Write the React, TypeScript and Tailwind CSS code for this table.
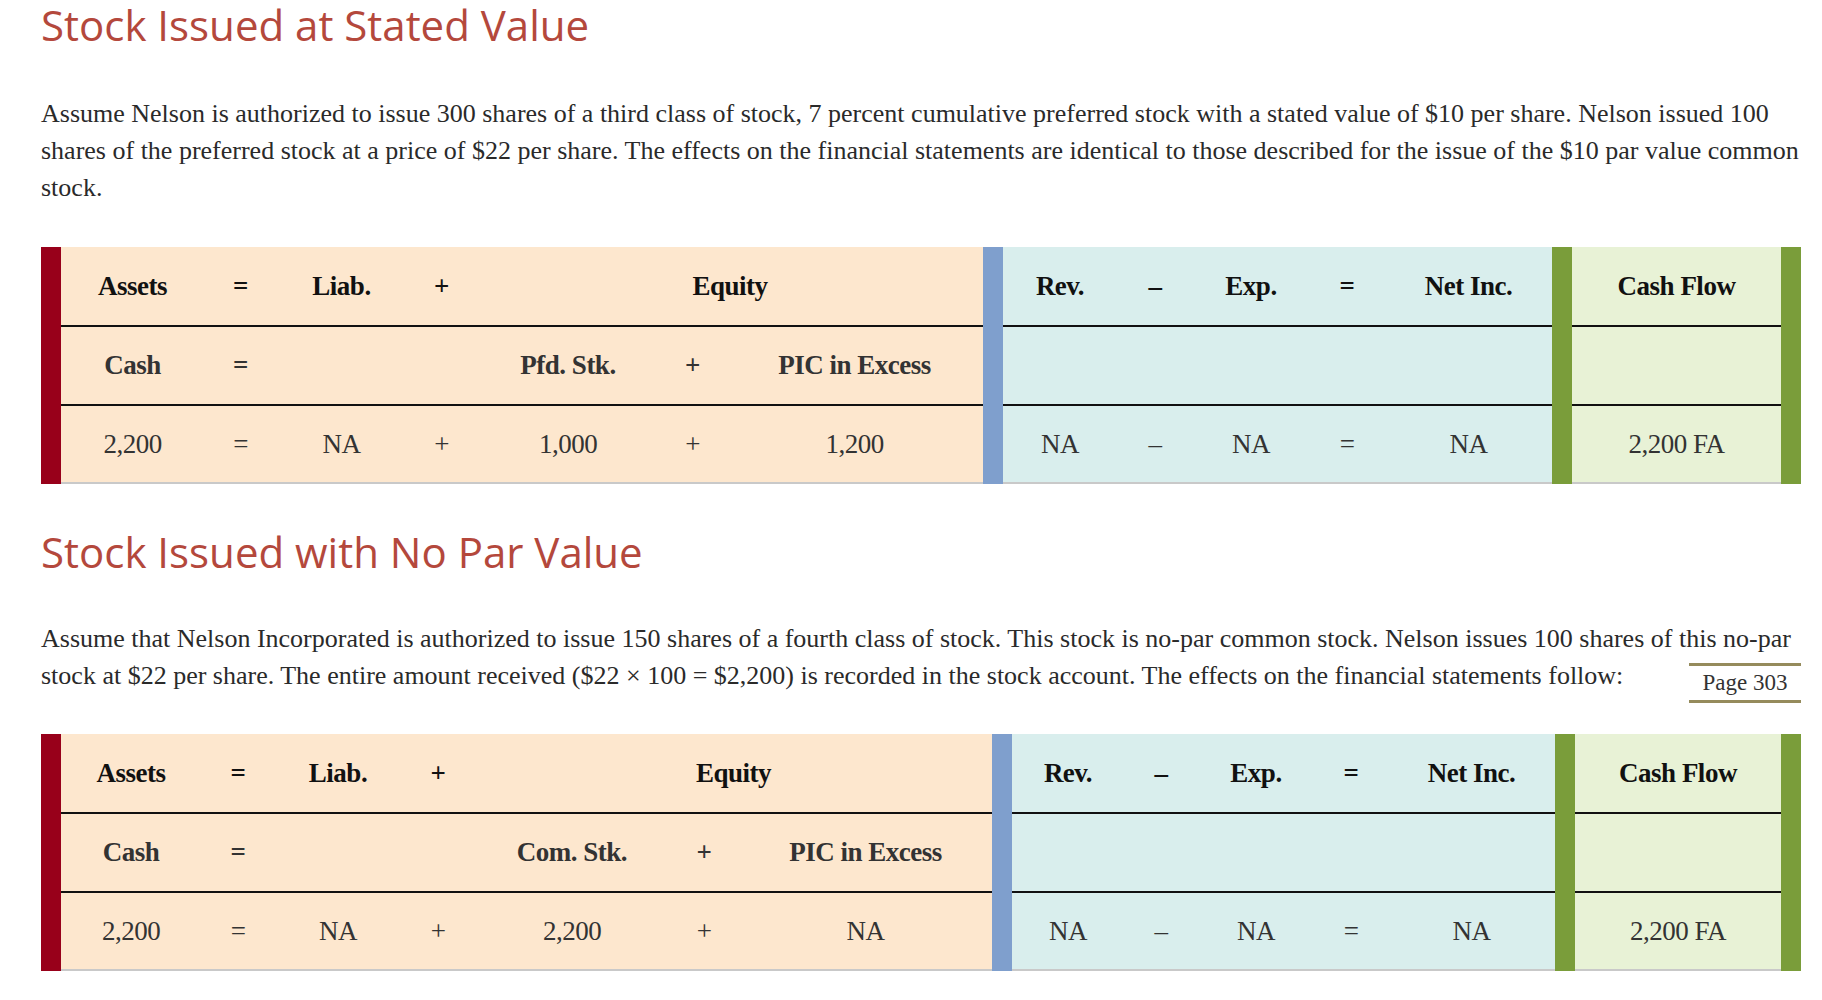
import React from 'react'

type TableProps = {
  cols: string
  stockLabel: string
  stockValue: string
  picValue: string
}

const BAR_RED = 'bg-[#98001a]'
const BAR_BLUE = 'bg-[#7f9fcd]'
const BAR_GREEN = 'bg-[#7a9d3a]'

const PEACH = 'bg-[#fde7ce]'
const ICE = 'bg-[#d9eeed]'
const LIME = 'bg-[#e8f2d6]'

function Bar({ color }: { color: string }) {
  return <div className={`row-span-3 ${color}`} />
}

function C({
  bg,
  row,
  bold,
  children,
  wide,
}: {
  bg: string
  row: 1 | 2 | 3
  bold?: boolean
  children?: React.ReactNode
  wide?: boolean
}) {
  const border =
    row === 3 ? 'border-b-2 border-b-[#c9c9c9]' : 'border-b-2 border-b-[#111]'
  const tone = row === 1 ? 'text-[#111]' : 'text-[#333]'
  return (
    <div
      className={`flex items-center justify-center ${bg} ${border} ${tone} ${
        bold ? 'font-bold' : 'font-normal'
      } ${wide ? 'col-span-3' : ''}`}
    >
      {children}
    </div>
  )
}

function EffectsTable({ cols, stockLabel, stockValue, picValue }: TableProps) {
  return (
    <div
      className={`grid ${cols} grid-rows-[80px_79px_78px] font-['Liberation_Serif','Times_New_Roman',serif] text-[27px] leading-none tracking-[-0.5px]`}
    >
      <Bar color={BAR_RED} />
      <C bg={PEACH} row={1} bold>Assets</C>
      <C bg={PEACH} row={1} bold>=</C>
      <C bg={PEACH} row={1} bold>Liab.</C>
      <C bg={PEACH} row={1} bold>+</C>
      <C bg={PEACH} row={1} bold wide>Equity</C>
      <Bar color={BAR_BLUE} />
      <C bg={ICE} row={1} bold>Rev.</C>
      <C bg={ICE} row={1} bold>–</C>
      <C bg={ICE} row={1} bold>Exp.</C>
      <C bg={ICE} row={1} bold>=</C>
      <C bg={ICE} row={1} bold>Net Inc.</C>
      <Bar color={BAR_GREEN} />
      <C bg={LIME} row={1} bold>Cash Flow</C>
      <Bar color={BAR_GREEN} />

      <C bg={PEACH} row={2} bold>Cash</C>
      <C bg={PEACH} row={2} bold>=</C>
      <C bg={PEACH} row={2} />
      <C bg={PEACH} row={2} />
      <C bg={PEACH} row={2} bold>{stockLabel}</C>
      <C bg={PEACH} row={2} bold>+</C>
      <C bg={PEACH} row={2} bold>PIC in Excess</C>
      <C bg={ICE} row={2} />
      <C bg={ICE} row={2} />
      <C bg={ICE} row={2} />
      <C bg={ICE} row={2} />
      <C bg={ICE} row={2} />
      <C bg={LIME} row={2} />

      <C bg={PEACH} row={3}>2,200</C>
      <C bg={PEACH} row={3}>=</C>
      <C bg={PEACH} row={3}>NA</C>
      <C bg={PEACH} row={3}>+</C>
      <C bg={PEACH} row={3}>{stockValue}</C>
      <C bg={PEACH} row={3}>+</C>
      <C bg={PEACH} row={3}>{picValue}</C>
      <C bg={ICE} row={3}>NA</C>
      <C bg={ICE} row={3}>–</C>
      <C bg={ICE} row={3}>NA</C>
      <C bg={ICE} row={3}>=</C>
      <C bg={ICE} row={3}>NA</C>
      <C bg={LIME} row={3}>2,200 FA</C>
    </div>
  )
}

const heading =
  "font-['Open_Sans','Lato',sans-serif] text-[42px] leading-[48px] text-[#b4483c]"
const body =
  "font-['Liberation_Serif','Times_New_Roman',serif] text-[26px] leading-[37px] text-[#2a2a2a]"

export default function App() {
  return (
    <div className="min-h-screen bg-white">
      <div className="ml-[41px] w-[1760px]">
        <h2 className={`${heading} pt-[1px]`}>Stock Issued at Stated Value</h2>

        <p className={`${body} mt-[46px]`}>
          Assume Nelson is authorized to issue 300 shares of a third class of stock, 7 percent
          cumulative preferred stock with a stated value of $10 per share. Nelson issued 100
          shares of the preferred stock at a price of $22 per share. The effects on the financial
          statements are identical to those described for the issue of the $10 par value common
          stock.
        </p>

        <div className="mt-[41px]">
          <EffectsTable
            cols="grid-cols-[20px_143px_73px_129px_71px_182px_67px_257px_20px_114px_76px_116px_76px_167px_20px_209px_20px]"
            stockLabel="Pfd. Stk."
            stockValue="1,000"
            picValue="1,200"
          />
        </div>

        <h2 className={`${heading} mt-[44px]`}>Stock Issued with No Par Value</h2>

        <p className={`${body} mt-[44px]`}>
          Assume that Nelson Incorporated is authorized to issue 150 shares of a fourth class of
          stock. This stock is no-par common stock. Nelson issues 100 shares of this no-par stock
          at $22 per share. The entire amount received ($22 × 100 = $2,200) is recorded in the
          stock account. The effects on the financial statements follow:
          <span className="float-right mt-[6px] w-[112px] border-y-[3px] border-[#958b5c] text-center text-[23px] leading-[34px] text-[#333]">
            Page 303
          </span>
        </p>

        <div className="mt-[40px]">
          <EffectsTable
            cols="grid-cols-[20px_140px_74px_126px_74px_194px_70px_253px_20px_112px_74px_116px_74px_167px_20px_206px_20px]"
            stockLabel="Com. Stk."
            stockValue="2,200"
            picValue="NA"
          />
        </div>
      </div>
    </div>
  )
}
